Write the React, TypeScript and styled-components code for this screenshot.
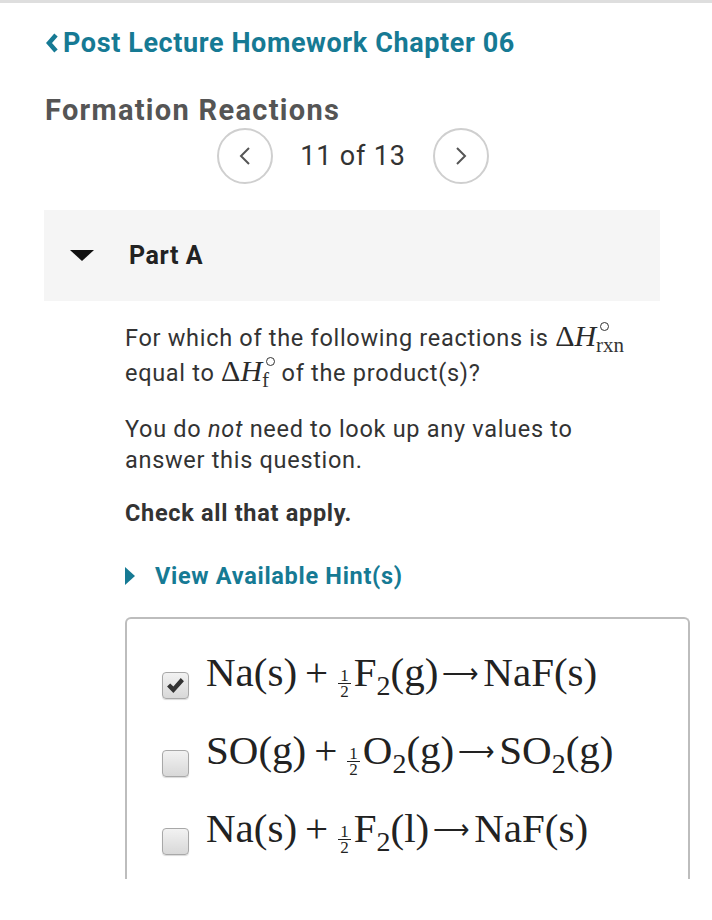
import React from 'react';
import styled, { createGlobalStyle } from 'styled-components';

const GlobalStyle = createGlobalStyle`
  body {
    margin: 0;
    background: #ffffff;
    font-family: Roboto, "Liberation Sans", Arial, sans-serif;
  }
`;

const TEAL = '#167a94';

const Page = styled.div`
  width: 712px;
  height: 920px;
  overflow: hidden;
  border-top: 3px solid #dedede;
  box-sizing: border-box;
`;

const BackLink = styled.a`
  display: flex;
  align-items: center;
  gap: 4px;
  margin: 24px 0 0 45px;
  color: ${TEAL};
  font-size: 27px;
  font-weight: 700;
  letter-spacing: 0.6px;
  text-decoration: none;
  line-height: 32px;
`;

const Title = styled.h1`
  margin: 34px 0 0 45px;
  font-size: 29px;
  font-weight: 700;
  color: #555555;
  letter-spacing: 1.3px;
  line-height: 34px;
`;

const Pager = styled.div`
  display: flex;
  align-items: center;
  justify-content: center;
  gap: 27px;
  margin: 1px 0 0 0;
  width: 706px;
`;

const RoundButton = styled.button`
  width: 56px;
  height: 56px;
  border-radius: 50%;
  border: 2px solid #cfcfcf;
  background: #ffffff;
  display: flex;
  align-items: center;
  justify-content: center;
  padding: 0;
`;

const PagerText = styled.span`
  font-size: 27px;
  color: #333333;
  letter-spacing: 0.8px;
`;

const PartHeader = styled.div`
  display: flex;
  align-items: center;
  margin: 26px 0 0 44px;
  width: 616px;
  height: 91px;
  background: #f5f5f5;
`;

const DownTriangle = styled.span`
  width: 0;
  height: 0;
  margin-left: 26px;
  border-left: 12px solid transparent;
  border-right: 12px solid transparent;
  border-top: 11px solid #111111;
`;

const PartTitle = styled.span`
  margin-left: 35px;
  font-size: 25px;
  font-weight: 700;
  letter-spacing: 0.6px;
  color: #222222;
`;

const Body = styled.div`
  margin-left: 125px;
  width: 530px;
  color: #333333;
  font-size: 23.5px;
  letter-spacing: 0.7px;
`;

const Para = styled.p<{ $top: number; $bold?: boolean }>`
  margin: ${(p) => p.$top}px 0 0 0;
  line-height: 31px;
  font-weight: ${(p) => (p.$bold ? 700 : 400)};
`;

const QuestionLine = styled.div<{ $top: number }>`
  margin-top: ${(p) => p.$top}px;
  height: 35px;
  line-height: 35px;
  white-space: nowrap;
`;

const MathSym = styled.span`
  font-family: "Liberation Serif", "Times New Roman", serif;
  font-size: 30px;
  letter-spacing: 0;
  color: #2a2a2a;
`;

const MathItalic = styled.span`
  font-style: italic;
`;

const Scripts = styled.span`
  display: inline-flex;
  flex-direction: column;
  align-items: flex-start;
  vertical-align: 15px;
  margin-left: 0;
  font-family: "Liberation Serif", "Times New Roman", serif;
  letter-spacing: 0;
`;

const Ring = styled.span`
  display: block;
  width: 9px;
  height: 9px;
  box-sizing: border-box;
  margin: 0 0 7px 4px;
  border: 1.3px solid #333333;
  border-radius: 50%;
`;

const Sub = styled.span`
  font-size: 21px;
  line-height: 14px;
`;

const HintRow = styled.div`
  display: flex;
  align-items: center;
  gap: 20px;
  margin-top: 32px;
  color: ${TEAL};
  font-size: 23.5px;
  font-weight: 700;
  line-height: 30px;
`;

const RightTriangle = styled.span`
  width: 0;
  height: 0;
  border-top: 9px solid transparent;
  border-bottom: 9px solid transparent;
  border-left: 10px solid ${TEAL};
`;

const AnswerBox = styled.div`
  margin: 26px 0 0 125px;
  width: 565px;
  height: 262px;
  box-sizing: border-box;
  border: 2px solid #bdbdbd;
  border-bottom: none;
  border-radius: 6px 6px 0 0;
  padding: 23px 0 0 35px;
  display: flex;
  flex-direction: column;
  gap: 18px;
`;

const Option = styled.label`
  display: flex;
  align-items: flex-start;
  gap: 17px;
  height: 60px;
`;

const Box = styled.span`
  width: 27px;
  height: 27px;
  margin-top: 30px;
  flex: none;
  box-sizing: border-box;
  border: 1px solid #a8a8a8;
  border-radius: 4px;
  background: linear-gradient(#f2f2f2, #d8d8d8);
  box-shadow: 0 1px 1px rgba(0, 0, 0, 0.15);
  display: flex;
  align-items: center;
  justify-content: center;
`;

const Equation = styled.span`
  font-family: "Liberation Serif", "Times New Roman", serif;
  font-size: 41px;
  line-height: 60px;
  color: #222222;
  white-space: nowrap;
`;

const Op = styled.span`
  margin: 0 8px;
`;

const Arrow = styled.span`
  display: inline-block;
  font-family: "DejaVu Sans", sans-serif;
  font-size: 30px;
  font-weight: 300;
  vertical-align: 3px;
  margin: 0 1px;
  transform: scaleX(0.85);
`;

const Frac = styled.span`
  display: inline-flex;
  flex-direction: column;
  align-items: center;
  font-size: 17px;
  line-height: 15px;
  vertical-align: 5px;
  margin: 0 3px 0 2px;
`;

const FracTop = styled.span`
  border-bottom: 1px solid #222222;
  padding: 0 2px;
`;

const Subscript = styled.span`
  display: inline-block;
  font-size: 28px;
  vertical-align: -9px;
  line-height: 20px;
`;

const Chevron = ({ dir }: { dir: 'left' | 'right' }) => (
  <svg width="12" height="20" viewBox="0 0 12 20">
    <polyline
      points={dir === 'left' ? '10,2 2,10 10,18' : '2,2 10,10 2,18'}
      fill="none"
      stroke="#555555"
      strokeWidth={2}
    />
  </svg>
);

const Check = () => (
  <svg width="19" height="17" viewBox="0 0 18 16">
    <path d="M1 9 L4 6 L7 9 L14 1 L17 4 L7 15 Z" fill="#333333" />
  </svg>
);

const Half = () => (
  <Frac>
    <FracTop>1</FracTop>
    <span>2</span>
  </Frac>
);

const DeltaH = ({ sub }: { sub: string }) => (
  <>
    <MathSym>
      Δ<MathItalic>H</MathItalic>
    </MathSym>
    <Scripts>
      <Ring />
      <Sub>{sub}</Sub>
    </Scripts>
  </>
);

const App: React.FC = () => (
  <Page>
    <GlobalStyle />
    <BackLink href="#">
      <svg width="14" height="22" viewBox="0 0 14 22">
        <polyline points="11,3 4,11 11,19" fill="none" stroke={TEAL} strokeWidth={4.5} />
      </svg>
      Post Lecture Homework Chapter 06
    </BackLink>
    <Title>Formation Reactions</Title>
    <Pager>
      <RoundButton aria-label="previous">
        <Chevron dir="left" />
      </RoundButton>
      <PagerText>11 of 13</PagerText>
      <RoundButton aria-label="next">
        <Chevron dir="right" />
      </RoundButton>
    </Pager>

    <PartHeader>
      <DownTriangle />
      <PartTitle>Part A</PartTitle>
    </PartHeader>

    <Body>
      <QuestionLine $top={17}>
        For which of the following reactions is <DeltaH sub="rxn" />
      </QuestionLine>
      <QuestionLine $top={0}>
        equal to <DeltaH sub="f" /> of the product(s)?
      </QuestionLine>
      <Para $top={26}>
        You do <i>not</i> need to look up any values to answer this question.
      </Para>
      <Para $top={22} $bold>
        Check all that apply.
      </Para>
      <HintRow>
        <RightTriangle />
        View Available Hint(s)
      </HintRow>
    </Body>

    <AnswerBox>
      <Option>
        <Box>
          <Check />
        </Box>
        <Equation>
          Na(s)<Op>+</Op>
          <Half />F<Subscript>2</Subscript>(g)<Arrow>⟶</Arrow>NaF(s)
        </Equation>
      </Option>
      <Option>
        <Box />
        <Equation>
          SO(g)<Op>+</Op>
          <Half />O<Subscript>2</Subscript>(g)<Arrow>⟶</Arrow>SO<Subscript>2</Subscript>(g)
        </Equation>
      </Option>
      <Option>
        <Box />
        <Equation>
          Na(s)<Op>+</Op>
          <Half />F<Subscript>2</Subscript>(l)<Arrow>⟶</Arrow>NaF(s)
        </Equation>
      </Option>
    </AnswerBox>
  </Page>
);

export default App;
